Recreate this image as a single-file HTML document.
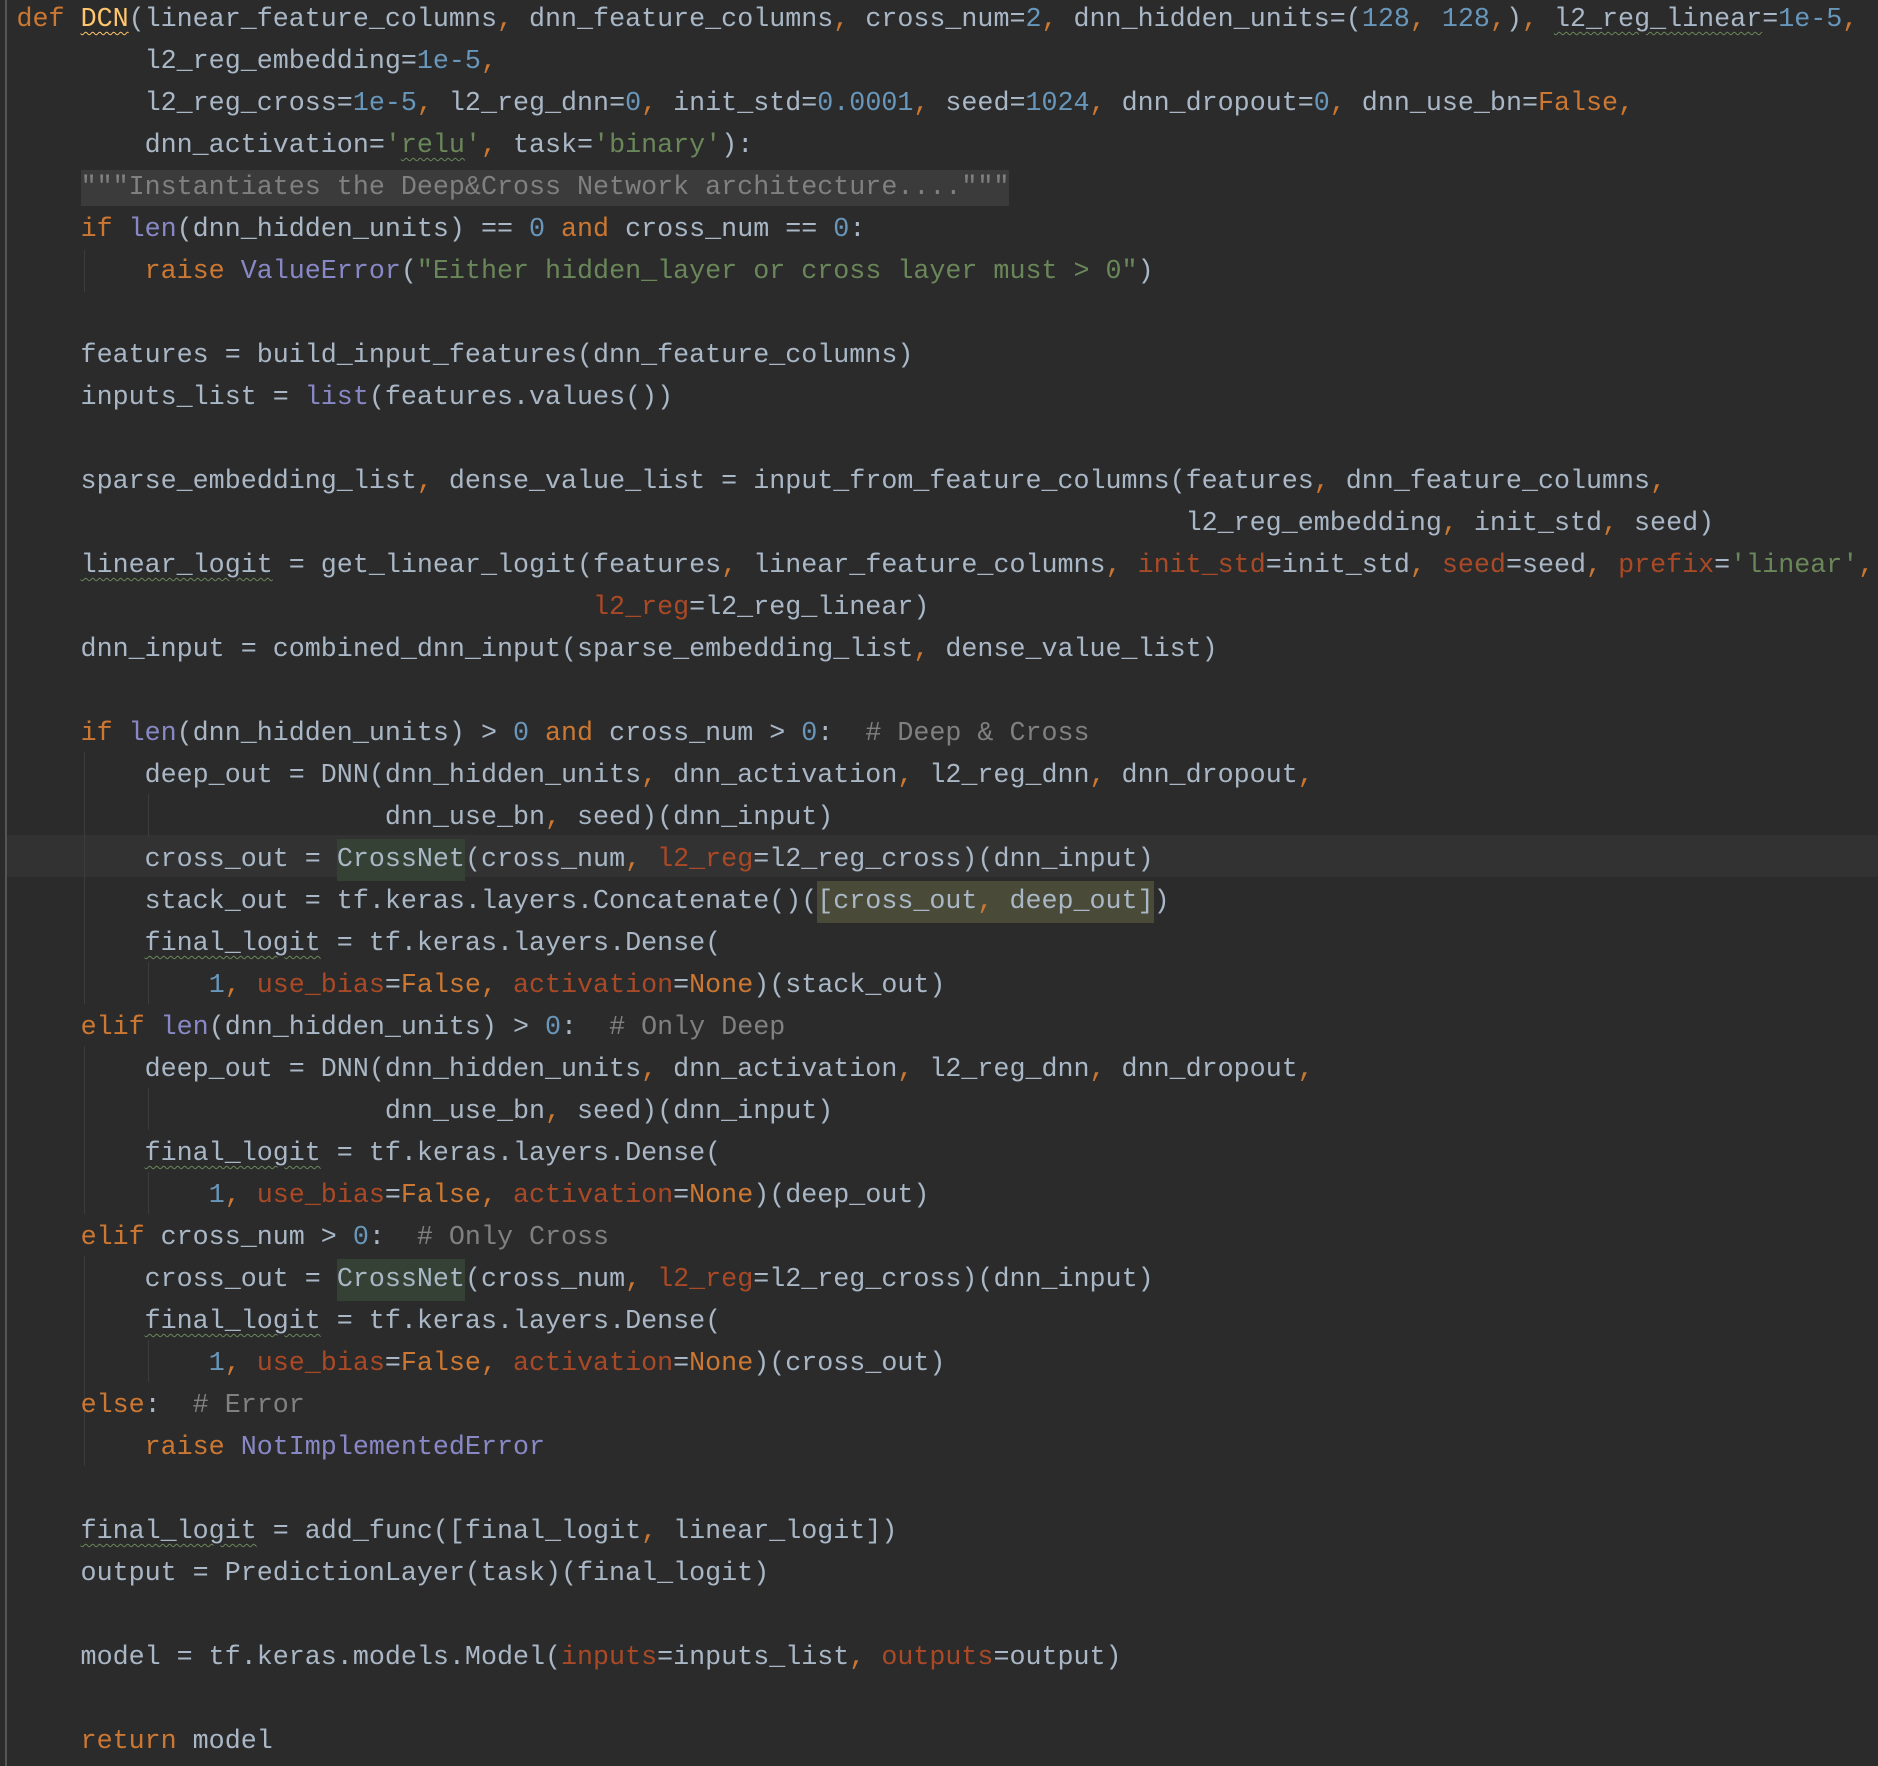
<!DOCTYPE html>
<html><head><meta charset="utf-8"><style>
html,body{margin:0;padding:0;background:#2b2b2b;width:1878px;height:1766px;overflow:hidden}
#g{position:absolute;left:5px;top:0;width:2px;height:1766px;background:#555}
#cur{position:absolute;left:7px;right:0;top:835px;height:42px;background:#323232}
pre{position:absolute;left:16.5px;top:-1px;margin:0;font-family:"Liberation Mono",monospace;font-size:26.7px;line-height:42px;color:#a9b7c6;white-space:pre}
.k{color:#cc7832}.n{color:#6897bb}.s{color:#6a8759}.b{color:#8888c6}.p{color:#aa4926}.c{color:#808080}.f{color:#ffc66d}
.d{color:#808080;background:#3b3b3b;padding:3px 0}
.w{text-decoration:underline wavy #6a8759;text-decoration-thickness:1px;text-underline-offset:5px}
.wy{text-decoration:underline wavy #ffc66d;text-decoration-thickness:1px;text-underline-offset:5px}
.h1{background:#344134;padding:6px 0}.h2{background:#4a4a38;padding:6px 0}
.ig{position:absolute;width:1px;background:#3c3c3c}
</style></head><body>
<div id="g"></div><div id="cur"></div>
<div class="ig" style="left:84px;top:250px;height:42px"></div>
<div class="ig" style="left:84px;top:752px;height:252px"></div>
<div class="ig" style="left:148px;top:794px;height:42px"></div>
<div class="ig" style="left:148px;top:962px;height:42px"></div>
<div class="ig" style="left:84px;top:1046px;height:168px"></div>
<div class="ig" style="left:148px;top:1088px;height:42px"></div>
<div class="ig" style="left:148px;top:1172px;height:42px"></div>
<div class="ig" style="left:84px;top:1256px;height:168px"></div>
<div class="ig" style="left:148px;top:1340px;height:42px"></div>
<div class="ig" style="left:84px;top:1424px;height:42px"></div>
<pre><span class="k">def</span> <span class="f wy">DCN</span>(linear_feature_columns<span class="k">,</span> dnn_feature_columns<span class="k">,</span> cross_num=<span class="n">2</span><span class="k">,</span> dnn_hidden_units=(<span class="n">128</span><span class="k">,</span> <span class="n">128</span><span class="k">,</span>)<span class="k">,</span> <span class="w">l2_reg_linear</span>=<span class="n">1e-5</span><span class="k">,</span>
        l2_reg_embedding=<span class="n">1e-5</span><span class="k">,</span>
        l2_reg_cross=<span class="n">1e-5</span><span class="k">,</span> l2_reg_dnn=<span class="n">0</span><span class="k">,</span> init_std=<span class="n">0.0001</span><span class="k">,</span> seed=<span class="n">1024</span><span class="k">,</span> dnn_dropout=<span class="n">0</span><span class="k">,</span> dnn_use_bn=<span class="k">False,</span>
        dnn_activation=<span class="s">'<span class="w">relu</span>'</span><span class="k">,</span> task=<span class="s">'binary'</span>):
    <span class="d">"""Instantiates the Deep&amp;Cross Network architecture...."""</span>
    <span class="k">if</span> <span class="b">len</span>(dnn_hidden_units) == <span class="n">0</span> <span class="k">and</span> cross_num == <span class="n">0</span>:
        <span class="k">raise</span> <span class="b">ValueError</span>(<span class="s">"Either hidden_layer or cross layer must &gt; 0"</span>)

    features = build_input_features(dnn_feature_columns)
    inputs_list = <span class="b">list</span>(features.values())

    sparse_embedding_list<span class="k">,</span> dense_value_list = input_from_feature_columns(features<span class="k">,</span> dnn_feature_columns<span class="k">,</span>
                                                                         l2_reg_embedding<span class="k">,</span> init_std<span class="k">,</span> seed)
    <span class="w">linear_logit</span> = get_linear_logit(features<span class="k">,</span> linear_feature_columns<span class="k">,</span> <span class="p">init_std</span>=init_std<span class="k">,</span> <span class="p">seed</span>=seed<span class="k">,</span> <span class="p">prefix</span>=<span class="s">'linear'</span><span class="k">,</span>
                                    <span class="p">l2_reg</span>=l2_reg_linear)
    dnn_input = combined_dnn_input(sparse_embedding_list<span class="k">,</span> dense_value_list)

    <span class="k">if</span> <span class="b">len</span>(dnn_hidden_units) &gt; <span class="n">0</span> <span class="k">and</span> cross_num &gt; <span class="n">0</span>:  <span class="c"># Deep &amp; Cross</span>
        deep_out = DNN(dnn_hidden_units<span class="k">,</span> dnn_activation<span class="k">,</span> l2_reg_dnn<span class="k">,</span> dnn_dropout<span class="k">,</span>
                       dnn_use_bn<span class="k">,</span> seed)(dnn_input)
        cross_out = <span class="h1">CrossNet</span>(cross_num<span class="k">,</span> <span class="p">l2_reg</span>=l2_reg_cross)(dnn_input)
        stack_out = tf.keras.layers.Concatenate()(<span class="h2">[cross_out<span class="k">,</span> deep_out]</span>)
        <span class="w">final_logit</span> = tf.keras.layers.Dense(
            <span class="n">1</span><span class="k">,</span> <span class="p">use_bias</span>=<span class="k">False,</span> <span class="p">activation</span>=<span class="k">None</span>)(stack_out)
    <span class="k">elif</span> <span class="b">len</span>(dnn_hidden_units) &gt; <span class="n">0</span>:  <span class="c"># Only Deep</span>
        deep_out = DNN(dnn_hidden_units<span class="k">,</span> dnn_activation<span class="k">,</span> l2_reg_dnn<span class="k">,</span> dnn_dropout<span class="k">,</span>
                       dnn_use_bn<span class="k">,</span> seed)(dnn_input)
        <span class="w">final_logit</span> = tf.keras.layers.Dense(
            <span class="n">1</span><span class="k">,</span> <span class="p">use_bias</span>=<span class="k">False,</span> <span class="p">activation</span>=<span class="k">None</span>)(deep_out)
    <span class="k">elif</span> cross_num &gt; <span class="n">0</span>:  <span class="c"># Only Cross</span>
        cross_out = <span class="h1">CrossNet</span>(cross_num<span class="k">,</span> <span class="p">l2_reg</span>=l2_reg_cross)(dnn_input)
        <span class="w">final_logit</span> = tf.keras.layers.Dense(
            <span class="n">1</span><span class="k">,</span> <span class="p">use_bias</span>=<span class="k">False,</span> <span class="p">activation</span>=<span class="k">None</span>)(cross_out)
    <span class="k">else</span>:  <span class="c"># Error</span>
        <span class="k">raise</span> <span class="b">NotImplementedError</span>

    <span class="w">final_logit</span> = add_func([final_logit<span class="k">,</span> linear_logit])
    output = PredictionLayer(task)(final_logit)

    model = tf.keras.models.Model(<span class="p">inputs</span>=inputs_list<span class="k">,</span> <span class="p">outputs</span>=output)

    <span class="k">return</span> model</pre>
</body></html>
